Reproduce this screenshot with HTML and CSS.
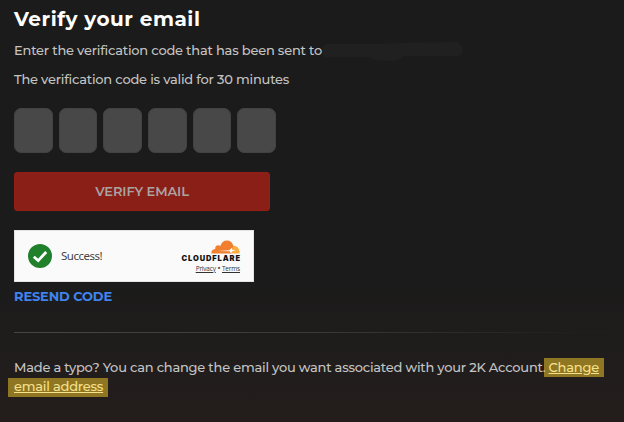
FILE: index.html
```html
<!DOCTYPE html>
<html lang="en">
<head>
    <meta charset="UTF-8">
    <meta name="viewport" content="width=device-width, initial-scale=1.0">
    <title>Verify your email</title>
    <link rel="stylesheet" href="styles.css">
</head>
<body>
    <main class="verify">
        <h1>Verify your email</h1>
        <div class="sent">
            <p class="sent-text">Enter the verification code that has been sent to</p>
            <svg class="hidden-email" width="142" height="20" viewBox="0 0 142 20">
                <path d="M4 3 L58 3 Q90 1 136 1 Q141 5 141 11 Q139 15 134 15 L82 15 Q78 20 70 20 L54 19 Q49 18 48 16 L3 16 Q0 14 0 9 Q0 5 4 3Z" fill="#202020"/>
            </svg>
        </div>
        <p class="valid">The verification code is valid for 30 minutes</p>

        <div class="code">
            <input type="text" maxlength="1">
            <input type="text" maxlength="1">
            <input type="text" maxlength="1">
            <input type="text" maxlength="1">
            <input type="text" maxlength="1">
            <input type="text" maxlength="1">
        </div>
        <button class="verify-btn">VERIFY EMAIL</button>

        <div class="captcha">
            <svg width="24" height="24" viewBox="0 0 24 24">
                <circle cx="12" cy="12" r="12" fill="#20802c"/>
                <path d="M5.8 12.8 L10.2 16.6 L18.2 8" fill="none" stroke="#fff" stroke-width="2.8"/>
            </svg>
            <span class="success">Success!</span>
            <div class="brand">
                <svg width="29" height="14" viewBox="0 0 29 14">
                    <path d="M20 13.5 L22 5.8 Q26.5 5.6 28 9.4 Q29 11 28.5 13.5Z" fill="#fbad41"/>
                    <path d="M0.3 13.5 Q0.2 9.3 4.2 9 Q4 5.2 7.3 5.2 Q8.6 5.2 9.3 6 Q11 0.4 15.8 0.4 Q21.3 0.4 22.3 6 L21.2 10 L20.2 13.5Z" fill="#f08030"/>
                    <path d="M7 10.9 L18.5 10.2 L20.8 7.8 L21.4 9.9 L25 10.5 L21.3 11.2 L20 13.2 L18.6 11.2Z" fill="#fff"/>
                </svg>
                <span class="brand-name">CLOUDFLARE</span>
                <span class="links"><a href="#">Privacy</a><b>•</b><a href="#">Terms</a></span>
            </div>
        </div>
        <a class="resend" href="#">RESEND CODE</a>

        <hr>

        <div class="typo">
            <p class="typo-text">Made a typo? You can change the email you want associated with your 2K Account.</p>
            <a class="mark mark-top" href="#">Change</a>
        </div>
        <a class="mark mark-bottom" href="#">email address</a>
    </main>
</body>
</html>
```
FILE: styles.css
```css
*{
    margin: 0;
    padding: 0;
    box-sizing: border-box;
}
body{
    height: 422px;
    overflow: hidden;
    background: linear-gradient(#1b1b1b 0, #1b1b1b 270px, #201d1c 365px, #241d1c 422px);
    color: #c4c4c4;
    font-family: Montserrat, Inter, sans-serif;
    font-size: 13px;
    font-weight: 500;
    line-height: 20px;
    letter-spacing: -0.21px;
}
.verify{
    padding: 7px 14px 0;
}
h1{
    color: #fff;
    font-size: 20px;
    font-weight: 700;
    line-height: 25px;
    letter-spacing: 0.55px;
}
.sent{
    display: flex;
    height: 20px;
    margin-top: 8px;
}
.sent-text,.valid,.typo-text{
    white-space: nowrap;
}
.hidden-email{
    margin-top: 1px;
}
.valid{
    margin-top: 9px;
}
.code{
    display: flex;
    gap: 6px;
    width: 262px;
    margin-top: 19px;
}
.code input{
    flex: 1;
    min-width: 0;
    height: 45px;
    background-color: #484848;
    border: 1px solid #424242;
    border-radius: 7px;
}
.verify-btn{
    display: block;
    width: 256px;
    height: 39px;
    margin-top: 19px;
    padding-bottom: 1px;
    background-color: #8a1f18;
    border: 1px solid #941d15;
    border-radius: 3px;
    color: #aaa3a2;
    font-family: inherit;
    font-size: 13px;
    font-weight: 600;
    letter-spacing: -0.1px;
}
.captcha{
    display: flex;
    align-items: center;
    width: 240px;
    height: 52px;
    margin-top: 19px;
    padding: 0 13px;
    background-color: #fafafa;
    border: 1px solid #e4e4e4;
    color: #444;
    font-family: "Open Sans", sans-serif;
    font-weight: 400;
    letter-spacing: 0;
}
.success{
    margin-left: 9px;
    font-family: "Noto Sans", sans-serif;
    font-size: 11.5px;
    letter-spacing: -0.5px;
}
.brand{
    display: flex;
    flex-direction: column;
    align-items: flex-end;
    margin-left: auto;
    margin-top: 1px;
}
.brand-name{
    font-family: Inter, sans-serif;
    font-size: 7.5px;
    font-weight: 900;
    line-height: 9px;
    letter-spacing: 0.9px;
    margin-right: -1px;
    color: #111;
}
.links{
    display: flex;
    gap: 2px;
    font-size: 6.5px;
    line-height: 11px;
    letter-spacing: -0.2px;
}
.links a{
    color: #333;
}
.resend{
    display: block;
    margin-top: 4px;
    color: #3f83f0;
    font-weight: 700;
    text-decoration: none;
    letter-spacing: -0.15px;
}
hr{
    height: 1px;
    margin-top: 26px;
    border: none;
    background: linear-gradient(90deg, #484543, #3c3937 50%, #201d1c 95%);
}
.typo{
    display: flex;
    height: 20px;
    margin-top: 25px;
}
.typo-text{
    position: relative;
    z-index: 1;
    margin-top: -1px;
    letter-spacing: -0.22px;
}
.mark{
    display: block;
    background-color: #8f7623;
    color: #f7e18b;
    line-height: 18px;
    height: 19px;
}
.mark-top{
    flex-shrink: 0;
    width: 60px;
    margin-left: -2px;
    padding-left: 5px;
}
.mark-bottom{
    width: 100px;
    margin-left: -6px;
    padding-left: 6px;
    line-height: 16px;
}
```
